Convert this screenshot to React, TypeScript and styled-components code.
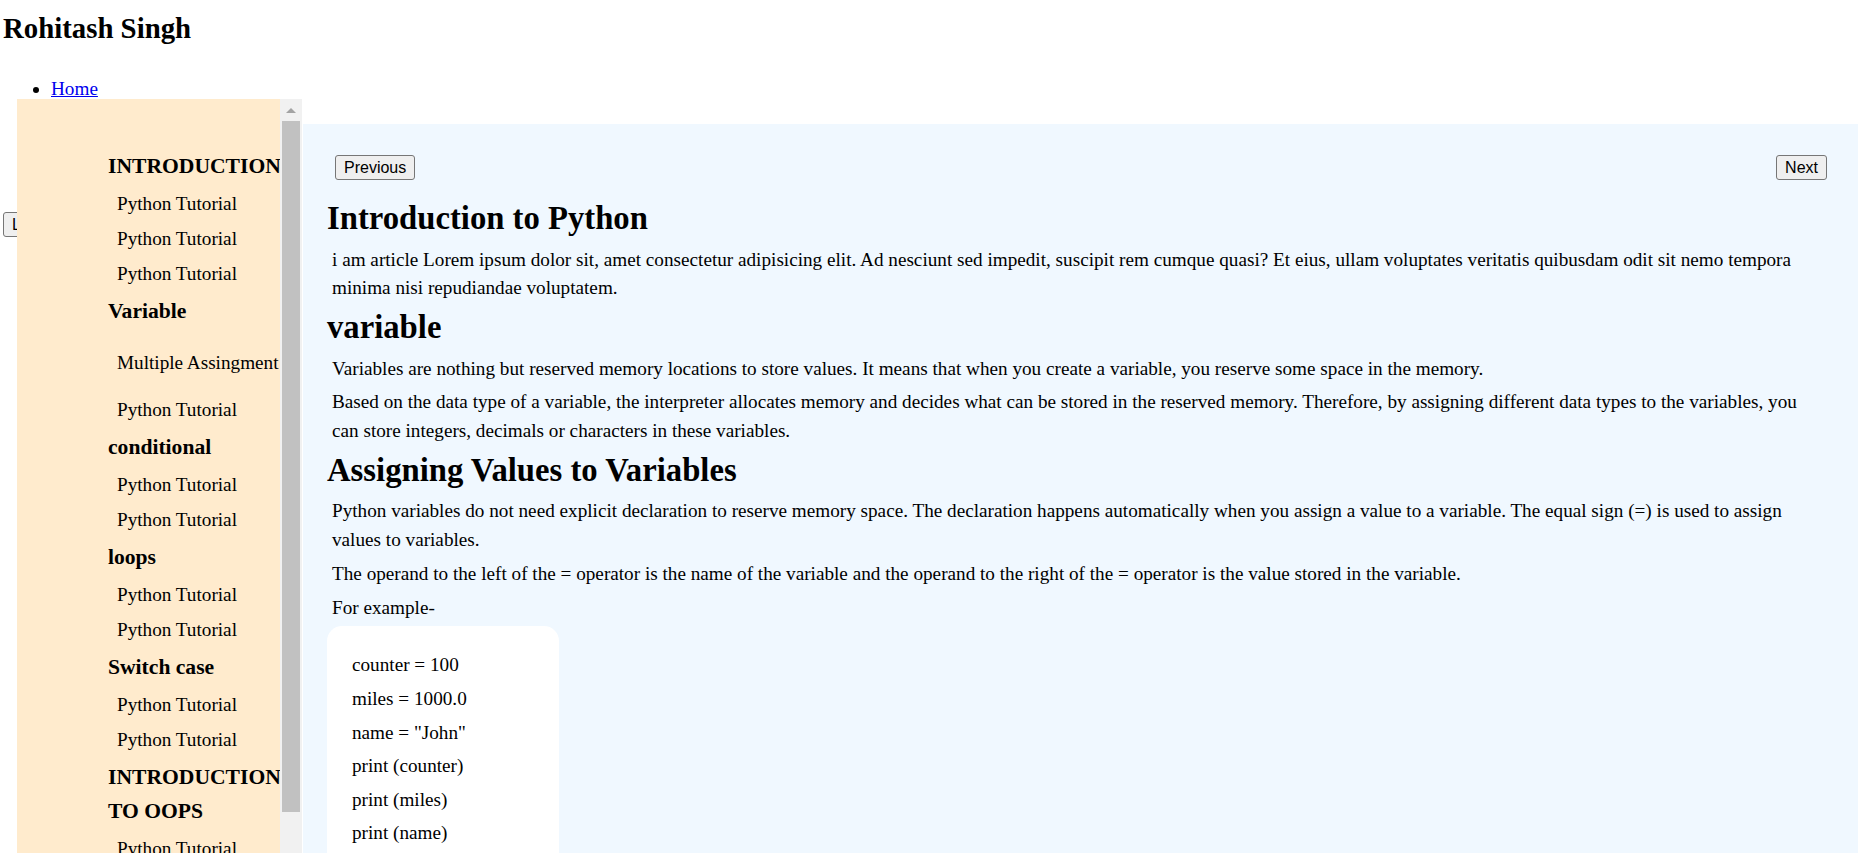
import React from "react";
import styled, { createGlobalStyle } from "styled-components";

const GlobalStyle = createGlobalStyle`
  html, body {
    margin: 0;
    padding: 0;
    overflow: hidden;
  }
  body {
    background: #ffffff;
    color: #000000;
    font-family: "Liberation Serif", "Times New Roman", serif;
    font-size: 19.2px;
  }
`;

const Page = styled.div`
  padding: 0 3px;
`;

const SiteTitle = styled.h1`
  margin: 12px 0 0;
  font-size: 28.8px;
  line-height: 33px;
  font-weight: bold;
`;

const NavList = styled.ul`
  margin: 33px 0 0;
  padding-left: 48px;
  line-height: 21px;
  list-style: disc;
`;

const NavLink = styled.a`
  color: #0000ee;
  text-decoration: underline;
`;

const Layout = styled.div`
  display: grid;
  grid-template-columns: 14px 286px 1fr;
  align-items: start;
`;

const Button = styled.button`
  font-family: "Liberation Sans", Arial, sans-serif;
  font-size: 16px;
  line-height: 19px;
  padding: 2px 8px;
  border: 1px solid #767676;
  border-radius: 3px;
  background: #efefef;
  color: #000000;
  cursor: pointer;
`;

const ToggleButton = styled(Button)`
  grid-column: 1 / 3;
  grid-row: 1;
  justify-self: start;
  margin-top: 113px;
`;

const Sidebar = styled.aside`
  grid-column: 2;
  grid-row: 1;
  z-index: 1;
  width: 285px;
  height: 100vh;
  display: flex;
`;

const SidebarBody = styled.div`
  flex: 1;
  min-width: 0;
  overflow: hidden;
  box-sizing: border-box;
  padding: 47px 0 0 91px;
  background: #ffebcd;
`;

const ScrollTrack = styled.div`
  flex: none;
  width: 22px;
  display: flex;
  flex-direction: column;
  background: #f1f1f1;
`;

const ScrollArrow = styled.div`
  flex: none;
  height: 22px;
  display: flex;
  align-items: center;
  justify-content: center;
`;

const ScrollThumb = styled.div`
  flex: none;
  height: 691px;
  margin: 0 2px;
  background: #c1c1c1;
`;

const ScrollRest = styled.div`
  flex: 1;
`;

const SectionTitle = styled.h3`
  margin: 3px 0;
  font-size: 21.6px;
  line-height: 34px;
  font-weight: bold;
`;

const TopicList = styled.ul`
  margin: 0;
  padding: 0;
  list-style: none;
`;

const Topic = styled.li<{ $spaced?: boolean }>`
  padding-left: 9px;
  line-height: 35px;
  white-space: nowrap;
  margin: ${(p) => (p.$spaced ? "17px 0 12px" : "0")};
`;

const Main = styled.main`
  grid-column: 3;
  grid-row: 1;
  margin-top: 25px;
  padding: 31px 31px 24px 24px;
  background: #f0f8ff;
`;

const ButtonRow = styled.div`
  display: flex;
  justify-content: space-between;
  padding-left: 8px;
  margin-bottom: 20px;
`;

const ArticleTitle = styled.h1`
  margin: 6px 0 8px;
  font-size: 32.7px;
  line-height: 37.5px;
  font-weight: bold;
`;

const Text = styled.p`
  margin: 5px 0;
  padding: 0 10px 0 5px;
  line-height: 28.8px;
`;

const CodeBox = styled.div`
  width: 232px;
  box-sizing: border-box;
  margin-top: -2px;
  padding: 21px 25px 18px;
  background: #ffffff;
  border-radius: 15px;
`;

const CodeLine = styled.p`
  margin: 4.8px 0;
  line-height: 28.8px;
`;

type Section = { title: string; topics: { label: string; spaced?: boolean }[] };

const sections: Section[] = [
  {
    title: "INTRODUCTION",
    topics: [{ label: "Python Tutorial" }, { label: "Python Tutorial" }, { label: "Python Tutorial" }],
  },
  {
    title: "Variable",
    topics: [{ label: "Multiple Assingment", spaced: true }, { label: "Python Tutorial" }],
  },
  { title: "conditional", topics: [{ label: "Python Tutorial" }, { label: "Python Tutorial" }] },
  { title: "loops", topics: [{ label: "Python Tutorial" }, { label: "Python Tutorial" }] },
  { title: "Switch case", topics: [{ label: "Python Tutorial" }, { label: "Python Tutorial" }] },
  {
    title: "INTRODUCTION TO OOPS",
    topics: [{ label: "Python Tutorial" }, { label: "Python Tutorial" }, { label: "Python Tutorial" }],
  },
  { title: "File Handling", topics: [{ label: "Python Tutorial" }, { label: "Python Tutorial" }] },
];

const codeLines = [
  "counter = 100",
  "miles = 1000.0",
  'name = "John"',
  "print (counter)",
  "print (miles)",
  "print (name)",
];

function ArrowIcon({ down }: { down?: boolean }) {
  return (
    <svg width="10" height="5" viewBox="0 0 10 5" aria-hidden="true">
      <polygon points={down ? "0,0 10,0 5,5" : "5,0 10,5 0,5"} fill="#a3a3a3" />
    </svg>
  );
}

export default function App() {
  return (
    <>
      <GlobalStyle />
      <Page>
        <SiteTitle>Rohitash Singh</SiteTitle>
        <NavList>
          <li>
            <NavLink href="#">Home</NavLink>
          </li>
        </NavList>
        <Layout>
          <ToggleButton>Lessons</ToggleButton>
          <Sidebar>
            <SidebarBody>
              {sections.map((s, i) => (
                <div key={i}>
                  <SectionTitle>{s.title}</SectionTitle>
                  <TopicList>
                    {s.topics.map((t, j) => (
                      <Topic key={j} $spaced={t.spaced}>
                        {t.label}
                      </Topic>
                    ))}
                  </TopicList>
                </div>
              ))}
            </SidebarBody>
            <ScrollTrack>
              <ScrollArrow>
                <ArrowIcon />
              </ScrollArrow>
              <ScrollThumb />
              <ScrollRest />
              <ScrollArrow>
                <ArrowIcon down />
              </ScrollArrow>
            </ScrollTrack>
          </Sidebar>
          <Main>
            <ButtonRow>
              <Button>Previous</Button>
              <Button>Next</Button>
            </ButtonRow>
            <ArticleTitle>Introduction to Python</ArticleTitle>
            <Text>
              i am article Lorem ipsum dolor sit, amet consectetur adipisicing elit. Ad nesciunt sed impedit,
              suscipit rem cumque quasi? Et eius, ullam voluptates veritatis quibusdam odit sit nemo tempora minima
              nisi repudiandae voluptatem.
            </Text>
            <ArticleTitle>variable</ArticleTitle>
            <Text>
              Variables are nothing but reserved memory locations to store values. It means that when you create a
              variable, you reserve some space in the memory.
            </Text>
            <Text>
              Based on the data type of a variable, the interpreter allocates memory and decides what can be stored in
              the reserved memory. Therefore, by assigning different data types to the variables, you can store
              integers, decimals or characters in these variables.
            </Text>
            <ArticleTitle>Assigning Values to Variables</ArticleTitle>
            <Text>
              Python variables do not need explicit declaration to reserve memory space. The declaration happens
              automatically when you assign a value to a variable. The equal sign (=) is used to assign values to
              variables.
            </Text>
            <Text>
              The operand to the left of the = operator is the name of the variable and the operand to the right of the
              = operator is the value stored in the variable.
            </Text>
            <Text>For example-</Text>
            <CodeBox>
              {codeLines.map((line, i) => (
                <CodeLine key={i}>{line}</CodeLine>
              ))}
            </CodeBox>
          </Main>
        </Layout>
      </Page>
    </>
  );
}
